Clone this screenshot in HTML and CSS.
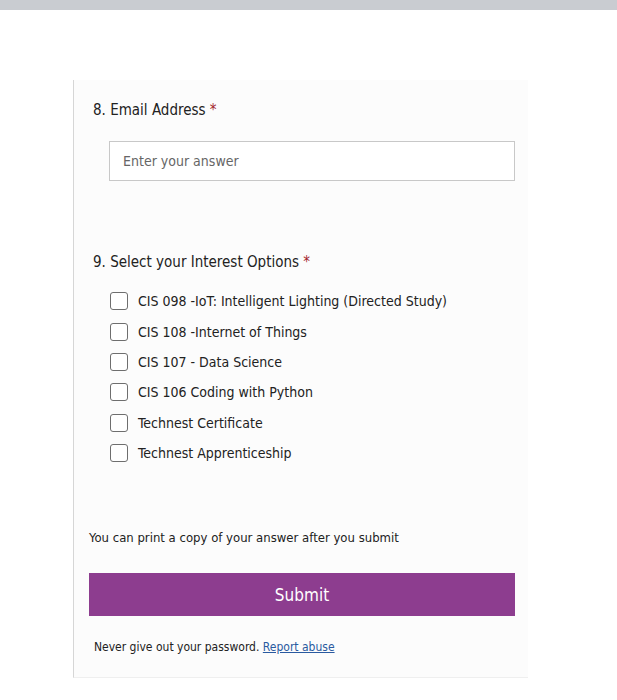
FILE: index.html
```html
<!DOCTYPE html>
<html>
<head>
<meta charset="utf-8">
<link rel="stylesheet" href="styles.css">
</head>
<body>
<div class="topbar"></div>
<div class="card">
  <div class="question q-email">
    <div class="qtitle"><span class="num">8.</span> Email Address <span class="req">*</span></div>
    <div class="answer-box">Enter your answer</div>
  </div>
  <div class="question q-options">
    <div class="qtitle"><span class="num">9.</span> Select your Interest Options <span class="req">*</span></div>
    <ul class="choices">
      <li><span class="box"></span><span class="label">CIS 098 -IoT: Intelligent Lighting (Directed Study)</span></li>
      <li><span class="box"></span><span class="label">CIS 108 -Internet of Things</span></li>
      <li><span class="box"></span><span class="label">CIS 107 - Data Science</span></li>
      <li><span class="box"></span><span class="label">CIS 106 Coding with Python</span></li>
      <li><span class="box"></span><span class="label">Technest Certificate</span></li>
      <li><span class="box"></span><span class="label">Technest Apprenticeship</span></li>
    </ul>
  </div>
  <div class="footer">
    <p class="print-note">You can print a copy of your answer after you submit</p>
    <button class="submit">Submit</button>
    <p class="legal">Never give out your password. <a href="#" class="abuse">Report abuse</a></p>
  </div>
</div>
</body>
</html>
```

FILE: styles.css
```css
html, body {
  margin: 0;
  padding: 0;
  background: #ffffff;
  font-family: "DejaVu Sans Condensed", "DejaVu Sans", sans-serif;
  color: #222;
}
.topbar {
  height: 10px;
  background: #c9ccd1;
}
.card {
  margin: 70px 0 0 73px;
  width: 455px;
  background: #fcfcfc;
  border-left: 1px solid #d6d6d6;
  border-bottom: 1px solid #efefef;
  box-sizing: border-box;
}
.question {
  padding-left: 19px;
}
.q-email {
  padding-top: 21px;
}
.qtitle {
  font-size: 15px;
  line-height: 18px;
  color: #222;
}
.req {
  color: #a4262c;
}
.answer-box {
  margin: 22px 0 0 16px;
  width: 406px;
  height: 40px;
  box-sizing: border-box;
  border: 1px solid #c8c8c8;
  background: #fff;
  font-size: 14px;
  color: #666;
  padding-left: 13px;
  display: flex;
  align-items: center;
}
.q-options {
  padding-top: 72px;
}
.choices {
  list-style: none;
  margin: 15px 0 0 17px;
  padding: 0;
}
.choices li {
  display: flex;
  align-items: center;
  height: 30.4px;
}
.box {
  width: 18px;
  height: 18px;
  box-sizing: border-box;
  border: 1px solid #6e6e6e;
  border-radius: 3px;
  background: #fff;
  flex: none;
}
.label {
  margin-left: 10px;
  font-size: 14px;
  color: #222;
}
.footer {
  padding: 62px 0 0 15px;
}
.print-note {
  margin: 0;
  font-size: 13px;
  line-height: 16px;
  color: #222;
}
.submit {
  display: block;
  margin-top: 27px;
  width: 426px;
  height: 43px;
  border: none;
  background: #8d3d8f;
  color: #fff;
  font-family: inherit;
  font-size: 17px;
  padding: 0;
}
.legal {
  margin: 0;
  padding: 24px 0 22px 5px;
  font-size: 12px;
  line-height: 15px;
  color: #222;
}
.abuse {
  color: #2a5aa0;
  text-decoration: underline;
}
```
